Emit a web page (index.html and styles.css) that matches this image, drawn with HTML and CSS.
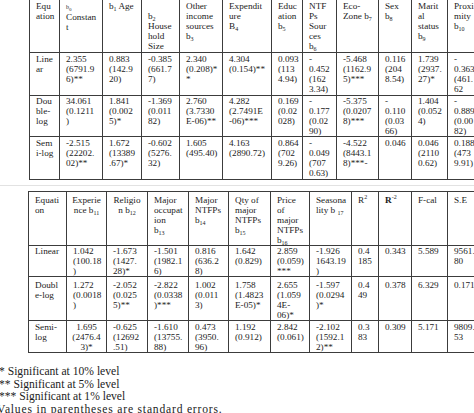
FILE: index.html
```html
<!DOCTYPE html>
<html>
<head>
<meta charset="utf-8">
<title>Regression results</title>
<link rel="stylesheet" href="styles.css">
</head>
<body>
<div class="page">
<table class="tbl t1">
<colgroup>
<col class="w30"><col class="w43"><col class="w39"><col class="w38"><col class="w43"><col class="w49"><col class="w31"><col class="w34"><col class="w42"><col class="w33"><col class="w36"><col class="w40">
</colgroup>
<tr class="t1-head">
<td>Equ<br>ation</td>
<td><span class="tiny">b<sub>0</sub></span><br>Constan<br>t</td>
<td>b<sub>1</sub> Age</td>
<td>&nbsp;<br>b<sub>2</sub><br>House<br>hold<br>Size</td>
<td>Other<br>income<br>sources<br>b<sub>3</sub></td>
<td>Expendit<br>ure<br>B<sub>4</sub></td>
<td>Educ<br>ation<br>b<sub>5</sub></td>
<td>NTF<br>Ps<br>Sour<br>ces<br>b<sub>6</sub></td>
<td>Eco-<br>Zone b<sub>7</sub></td>
<td>Sex<br>b<sub>8</sub></td>
<td>Marit<br>al<br>status<br>b<sub>9</sub></td>
<td>Proxi<br>mity<br>b<sub>10</sub></td>
</tr>
<tr class="t1-lin">
<td>Line<br>ar</td>
<td>2.355<br>(6791.9<br>6)**</td>
<td>0.883<br>(142.9<br>20)</td>
<td>-0.385<br>(661.7<br>7)</td>
<td>2.340<br>(0.208)*<br>*</td>
<td>4.304<br>(0.154)**</td>
<td>0.093<br>(113<br>4.94)</td>
<td>-<br>0.452<br>(162<br>3.34)</td>
<td>-5.468<br>(1162.9<br>5)***</td>
<td>0.116<br>(204<br>8.54)</td>
<td>1.739<br>(2937.<br>27)*</td>
<td>-<br>0.363*<br>(461.<br>62</td>
</tr>
<tr class="t1-dbl">
<td>Dou<br>ble-<br>log</td>
<td>34.061<br>(0.1211<br>)</td>
<td>1.841<br>(0.002<br>5)*</td>
<td>-1.369<br>(0.011<br>82)</td>
<td>2.760<br>(3.7330<br>E-06)**</td>
<td>4.282<br>(2.7491E<br>-06)***</td>
<td>0.169<br>(0.02<br>028)</td>
<td>-<br>0.177<br>(0.02<br>90)</td>
<td>-5.375<br>(0.0207<br>8)***</td>
<td>-<br>0.110<br>(0.03<br>66)</td>
<td>1.404<br>(0.052<br>4)</td>
<td>-<br>0.889*<br>(0.00<br>82)</td>
</tr>
<tr class="t1-semi">
<td>Sem<br>i-log</td>
<td>-2.515<br>(22202.<br>02)**</td>
<td>1.672<br>(13389<br>.67)*</td>
<td>-0.602<br>(5276.<br>32)</td>
<td>1.605<br>(495.40)</td>
<td>4.163<br>(2890.72)</td>
<td>0.864<br>(702<br>9.26)</td>
<td>-<br>0.049<br>(707<br>0.63)</td>
<td>-4.522<br>(8443.1<br>8)***-</td>
<td>0.046</td>
<td>0.046<br>(2110<br>0.62)</td>
<td>0.188*<br>(473<br>9.91)</td>
</tr>
</table>

<div class="rule"></div>

<table class="tbl t2">
<colgroup>
<col class="w38"><col class="w40"><col class="w41"><col class="w41"><col class="w40"><col class="w42"><col class="w39"><col class="w42"><col class="w27"><col class="w33"><col class="w36"><col class="w40">
</colgroup>
<tr class="t2-head">
<td>Equati<br>on</td>
<td class="ctr">Experie<br>nce b<sub>11</sub></td>
<td class="ctr">Religio<br>n b<sub>12</sub></td>
<td>Major<br>occupat<br>ion<br>b<sub>13</sub></td>
<td>Major<br>NTFPs<br>b<sub>14</sub></td>
<td>Qty of<br>major<br>NTFPs<br>b<sub>15</sub></td>
<td>Price<br>of<br>major<br>NTFPs<br>b<sub>16</sub></td>
<td>Seasona<br>lity b <sub>17</sub></td>
<td>R<sup>2</sup></td>
<td><b>R</b><sup>-2</sup></td>
<td>F-cal</td>
<td>S.E</td>
</tr>
<tr class="t2-lin">
<td>Linear</td>
<td>1.042<br>(100.18<br>)</td>
<td>-1.673<br>(1427.<br>28)*</td>
<td>-1.501<br>(1982.1<br>6)</td>
<td>0.816<br>(636.2<br>8)</td>
<td>1.642<br>(0.829)</td>
<td>2.859<br>(0.059)<br>***</td>
<td>-1.926<br>1643.19<br>)</td>
<td>0.4<br>185</td>
<td>0.343</td>
<td>5.589</td>
<td>9561.<br>80</td>
</tr>
<tr class="t2-dbl">
<td>Doubl<br>e-log</td>
<td>1.272<br>(0.0018<br>)</td>
<td>-2.052<br>(0.025<br>5)**</td>
<td>-2.822<br>(0.0338<br>)***</td>
<td>1.002<br>(0.011<br>3)</td>
<td>1.758<br>(1.4823<br>E-05)*</td>
<td>2.655<br>(1.059<br>4E-<br>06)*</td>
<td>-1.597<br>(0.0294<br>)*</td>
<td>0.4<br>49</td>
<td>0.378</td>
<td>6.329</td>
<td>0.171</td>
</tr>
<tr class="t2-semi">
<td>Semi-<br>log</td>
<td class="ctr">1.695<br>(2476.4<br>3)*</td>
<td>-0.625<br>(12692<br>.51)</td>
<td>-1.610<br>(13755.<br>88)</td>
<td>0.473<br>(3950.<br>96)</td>
<td>1.192<br>(0.912)</td>
<td>2.842<br>(0.061)</td>
<td>-2.102<br>(1592.1<br>2)**</td>
<td>0.3<br>83</td>
<td>0.309</td>
<td>5.171</td>
<td>9809.<br>53</td>
</tr>
</table>

<div class="notes">
<p>* Significant at 10% level</p>
<p>** Significant at 5% level</p>
<p>*** Significant at 1% level</p>
<p class="wide">Values in parentheses are standard errors.</p>
</div>
</div>
</body>
</html>
```
FILE: styles.css
```css
html, body {
  margin: 0;
  padding: 0;
  overflow: hidden;
  background: #ffffff;
}
body {
  width: 474px;
  height: 413px;
  font-family: "Liberation Serif", "Times New Roman", serif;
  color: #1c1c1c;
}
.page {
  display: flex;
  flex-direction: column;
  align-items: flex-start;
  width: 520px;
}
.tbl {
  border-collapse: collapse;
  table-layout: fixed;
  font-size: 9.2px;
  line-height: 10px;
}
.tbl td {
  border: 1px solid #3c3c3c;
  vertical-align: top;
  padding: 0 1px 0 6px;
  white-space: nowrap;
  overflow: hidden;
}
.tbl td.ctr {
  text-align: center;
  padding-left: 3px;
  padding-right: 3px;
}
.tbl sub {
  font-size: 6px;
  vertical-align: -2px;
  line-height: 0;
}
.tbl sup {
  font-size: 6px;
  vertical-align: 4px;
  line-height: 0;
}
.tiny {
  font-size: 6px;
}
.tiny sub {
  font-size: 5px;
}
.w27 { width: 27px; }
.w30 { width: 30px; }
.w31 { width: 31px; }
.w33 { width: 33px; }
.w34 { width: 34px; }
.w36 { width: 36px; }
.w38 { width: 38px; }
.w39 { width: 39px; }
.w40 { width: 40px; }
.w41 { width: 41px; }
.w42 { width: 42px; }
.w43 { width: 43px; }
.w49 { width: 49px; }

.t1 {
  margin: -1px 0 0 29px;
  width: 458px;
}
.t1-head { height: 53px; }
.t1-head td { padding-top: 1px; }
.t1-lin { height: 43px; }
.t1-lin td { padding-top: 1px; }
.t1-dbl { height: 40px; }
.t1-semi { height: 43px; }
.t1-semi td { padding-top: 1px; }

.rule {
  width: 100%;
  height: 1px;
  background: #e2e2e2;
  margin: 5px 0 5px 0;
}

.t2 {
  margin: 0 0 0 28px;
  width: 459px;
}
.t2-head { height: 54px; }
.t2-head td { padding-top: 3px; }
.t2-lin { height: 29px; }
.t2-dbl { height: 44px; }
.t2-dbl td { padding-top: 3px; }
.t2-semi { height: 31px; }
.t2-semi td { padding-top: 1px; }

.notes {
  margin: 13px 0 0 -1px;
  font-size: 11.6px;
  line-height: 12.5px;
}
.notes p {
  margin: 0;
  white-space: nowrap;
}
.notes p.wide {
  letter-spacing: 0.8px;
  margin-left: -2px;
}
```
